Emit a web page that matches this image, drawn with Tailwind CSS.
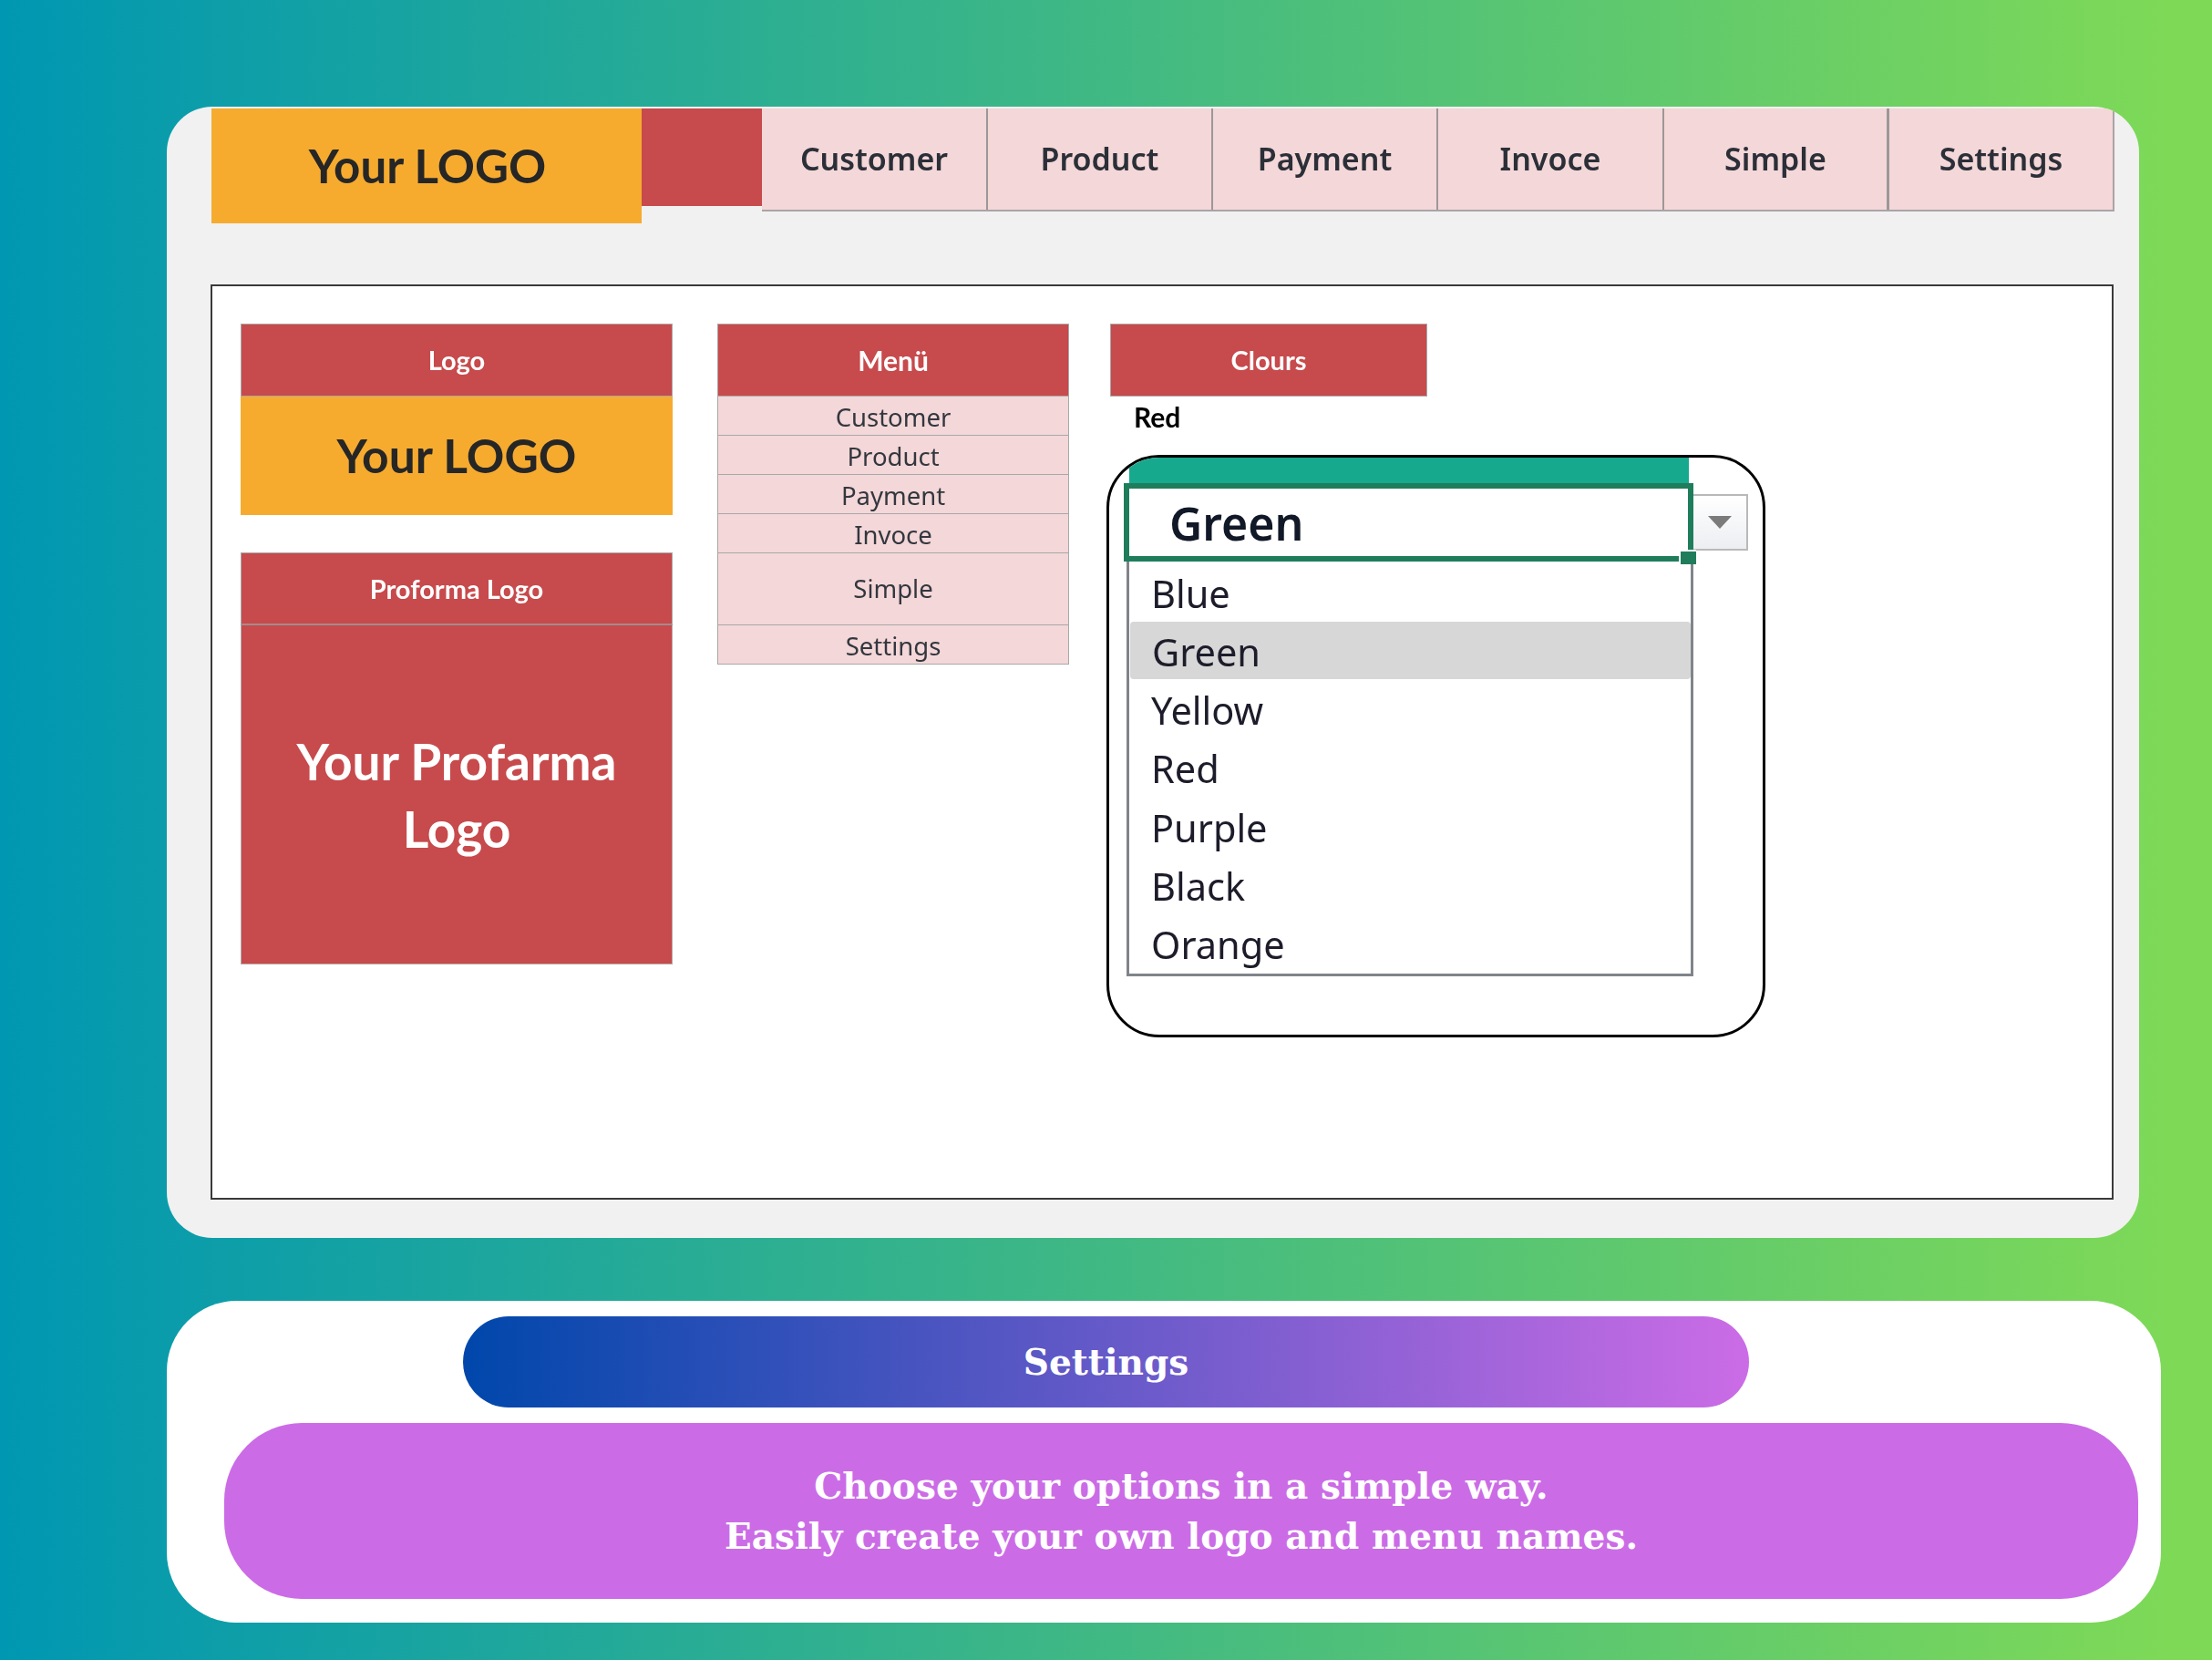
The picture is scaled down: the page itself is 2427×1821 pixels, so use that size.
<!DOCTYPE html>
<html lang="en">
<head>
<meta charset="utf-8">
<title>Settings</title>
<script src="https://cdn.jsdelivr.net/npm/@tailwindcss/browser@4"></script>
</head>
<body class="m-0 w-[2427px] h-[1821px] overflow-hidden bg-linear-to-r/srgb from-[#0097b2] to-[#7ed957] to-[98%] font-['Lato',sans-serif]">
<div class="flex flex-col items-start pt-[117px] pl-[183px]">

  <!-- Spreadsheet panel -->
  <section class="w-[2164px] h-[1241px] rounded-[50px] bg-[#f1f1f1] overflow-hidden pt-[2px] pl-[49px]">
    <header class="flex items-start h-[126px]">
      <div class="w-[472px] h-[126px] bg-[#f6ab2f] flex justify-center pt-[37px] pl-[2px]">
        <span class="text-[51px] leading-[52px] font-bold text-[#262626] blur-[0.5px]">Your LOGO</span>
      </div>
      <div class="w-[132px] h-[107px] bg-[#c74a4c]"></div>
      <nav class="flex h-[113px] text-[#2b2f38] font-['Noto_Sans',sans-serif] font-semibold text-[34px] border-b-2 border-[#a9a4a6] bg-[#f4d7d8]">
        <div class="w-[248px] border-r-2 border-[#9c9799] flex items-center justify-center"><span class="blur-[0.5px]">Customer</span></div>
        <div class="w-[247px] border-r-2 border-[#9c9799] flex items-center justify-center"><span class="blur-[0.5px]">Product</span></div>
        <div class="w-[247px] border-r-2 border-[#9c9799] flex items-center justify-center"><span class="blur-[0.5px]">Payment</span></div>
        <div class="w-[248px] border-r-2 border-[#9c9799] flex items-center justify-center"><span class="blur-[0.5px]">Invoce</span></div>
        <div class="w-[247px] border-r-3 border-[#9c9799] flex items-center justify-center"><span class="blur-[0.5px]">Simple</span></div>
        <div class="w-[247px] border-r-2 border-[#a9a4a6] flex items-center justify-center"><span class="blur-[0.5px]">Settings</span></div>
      </nav>
    </header>

    <main class="mt-[67px] -ml-[1px] w-[2088px] h-[1004px] bg-white border-2 border-[#3a3a3a] flex items-start pt-[41px] pl-[31px]">
      <!-- Logo column -->
      <div class="w-[474px] flex flex-col">
        <div class="h-[80px] bg-[#c74a4c] border border-[#a8a8a8] flex items-center justify-center text-white text-[29px] font-bold"><span class="blur-[0.4px]">Logo</span></div>
        <div class="h-[130px] bg-[#f6ab2f] flex items-center justify-center text-[#262626] text-[51.5px] font-bold"><span class="blur-[0.5px]">Your LOGO</span></div>
        <div class="mt-[41px] h-[80px] bg-[#c74a4c] border border-[#a8a8a8] border-b-2 border-b-[#a58a8b] flex items-center justify-center text-white text-[29px] font-bold"><span class="blur-[0.4px]">Proforma Logo</span></div>
        <div class="h-[372px] bg-[#c74a4c] border border-t-0 border-[#b3a9a9] flex items-center justify-center text-center text-white text-[55px] leading-[74px] font-bold"><span class="blur-[0.5px]">Your Profarma<br>Logo</span></div>
      </div>

      <!-- Menu column -->
      <div class="ml-[49px] w-[386px] flex flex-col text-[#33373f] text-[27.5px] font-['Noto_Sans',sans-serif]">
        <div class="h-[80px] bg-[#c74a4c] border border-[#a8a8a8] flex items-center justify-center text-white text-[30px] font-['Lato',sans-serif] font-bold"><span class="blur-[0.4px]">Menü</span></div>
        <div class="h-[43px] pt-[3px] bg-[#f4d7d8] border border-t-0 border-[#a8a8a8] flex items-center justify-center"><span class="blur-[0.5px]">Customer</span></div>
        <div class="h-[43px] pt-[3px] bg-[#f4d7d8] border border-t-0 border-[#a8a8a8] flex items-center justify-center"><span class="blur-[0.5px]">Product</span></div>
        <div class="h-[43px] pt-[3px] bg-[#f4d7d8] border border-t-0 border-[#a8a8a8] flex items-center justify-center"><span class="blur-[0.5px]">Payment</span></div>
        <div class="h-[43px] pt-[3px] bg-[#f4d7d8] border border-t-0 border-[#a8a8a8] flex items-center justify-center"><span class="blur-[0.5px]">Invoce</span></div>
        <div class="h-[79px] bg-[#f4d7d8] border border-t-0 border-[#a8a8a8] flex items-center justify-center"><span class="blur-[0.5px]">Simple</span></div>
        <div class="h-[43px] pt-[3px] bg-[#f4d7d8] border border-t-0 border-[#a8a8a8] flex items-center justify-center"><span class="blur-[0.5px]">Settings</span></div>
      </div>

      <!-- Colours column -->
      <div class="ml-[45px] flex flex-col items-start">
        <div class="w-[348px] h-[80px] bg-[#c74a4c] border border-[#a8a8a8] flex items-center justify-center text-white text-[29px] font-bold"><span class="blur-[0.4px]">Clours</span></div>
        <div class="h-[43px] pt-[2px] pl-[26px] flex items-center text-black text-[30px] font-bold"><span class="blur-[0.3px]">Red</span></div>
        <div class="mt-[21px] -ml-[4px] w-[723px] h-[639px] rounded-[58px] border-[3px] border-black bg-white pl-[15px] overflow-hidden">
          <div class="ml-[7px] w-[614px] h-[28px] bg-[#17a98e]"></div>
          <div class="flex items-center">
            <div class="relative ml-[1px] w-[625px] h-[86px] border-[6px] border-[#1f7d5c] bg-white flex items-center pl-[44px] pt-[3px] font-['Noto_Sans',sans-serif] font-semibold text-[50px] text-[#111827]">
              <span class="blur-[0.5px]">Green</span>
              <span class="absolute -right-[9px] -bottom-[9px] w-[19px] h-[16px] bg-[#1f7d5c] border-l-2 border-t-2 border-white"></span>
            </div>
            <div class="-ml-[3px] w-[63px] h-[62px] border-2 border-[#b9b9b9] bg-linear-to-b from-white to-[#eceef2] flex items-center justify-center">
              <svg width="28" height="18" viewBox="0 0 28 18"><path d="M1 2h26L14 16z" fill="#7b7b7b"/></svg>
            </div>
          </div>
          <ul class="ml-[4px] w-[622px] h-[455px] border-[3px] border-t-0 border-[#80848a] bg-white font-['Noto_Sans',sans-serif] text-[41.5px] text-[#1c1c2a] pt-[2px]">
            <li class="h-[64px] pt-[3px] pl-[24px] flex items-center"><span class="blur-[0.5px]">Blue</span></li>
            <li class="h-[63px] pt-[3px] pl-[24px] ml-[1px] flex items-center bg-[#d7d7d7] rounded-[4px]"><span class="blur-[0.5px]">Green</span></li>
            <li class="h-[65px] pt-[3px] pl-[24px] flex items-center"><span class="blur-[0.5px]">Yellow</span></li>
            <li class="h-[64px] pt-[3px] pl-[24px] flex items-center"><span class="blur-[0.5px]">Red</span></li>
            <li class="h-[65px] pt-[3px] pl-[24px] flex items-center"><span class="blur-[0.5px]">Purple</span></li>
            <li class="h-[64px] pt-[3px] pl-[24px] flex items-center"><span class="blur-[0.5px]">Black</span></li>
            <li class="h-[64px] pt-[3px] pl-[24px] flex items-center"><span class="blur-[0.5px]">Orange</span></li>
          </ul>
        </div>
      </div>
    </main>
  </section>

  <!-- Caption panel -->
  <section class="mt-[69px] w-[2188px] h-[353px] rounded-[77px] bg-white font-['DejaVu_Serif',serif] font-bold text-white flex flex-col pt-[17px] pl-[63px]">
    <div class="ml-[262px] w-[1411px] h-[100px] rounded-[50px] bg-linear-to-r/srgb from-[#0047ab] to-[#cb6ce6] flex items-center justify-center text-[39px]">Settings</div>
    <div class="mt-[17px] w-[2100px] h-[193px] rounded-[85px] bg-[#cb6ce6] flex flex-col items-center justify-center text-[39px] leading-[55px] tracking-[0.05px]">
      <p>Choose your options in a simple way.</p>
      <p>Easily create your own logo and menu names.</p>
    </div>
  </section>
</div>
</body>
</html>
